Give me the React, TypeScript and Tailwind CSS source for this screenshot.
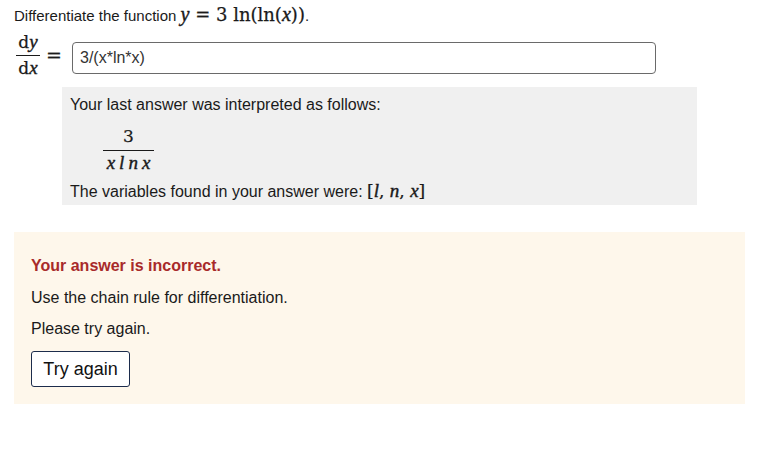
import React from 'react';

const sans = { fontFamily: '"Liberation Sans", Arial, sans-serif' };
const serif = { fontFamily: '"DejaVu Serif", "Liberation Serif", serif' };
const italic = { fontFamily: '"Liberation Serif", "Times New Roman", serif' };

// upright math (digits, operators, function names)
function M({ children, className = '' }: { children: React.ReactNode; className?: string }) {
  return (
    <span className={`[-webkit-text-stroke:0.25px_currentColor] ${className}`} style={serif}>
      {children}
    </span>
  );
}

// math italic variable
function V({ children, className = '' }: { children: React.ReactNode; className?: string }) {
  return (
    <span className={`italic text-[1.12em] [-webkit-text-stroke:0.4px_currentColor] ${className}`} style={italic}>
      {children}
    </span>
  );
}

export default function App() {
  return (
    <div className="w-[777px] h-[457px] bg-white text-[#1a1a1a]" style={sans}>
      {/* Question */}
      <div className="pl-[14px] h-[28px] text-[15px] leading-[28px]">
        Differentiate the function{' '}
        <M className="text-[18px]">
          <V>y</V> = 3 ln(ln(<V>x</V>))
        </M>
        .
      </div>

      {/* Answer input row */}
      <div className="flex items-start pl-[16px] h-[58px]">
        <M className="flex flex-col items-center w-[24px] text-[17px]">
          <span className="mt-[4px] leading-[20px]">
            d<V>y</V>
          </span>
          <span className="w-[24px] h-[1px] bg-[#1a1a1a] mt-[3px]" />
          <span className="mt-[2px] leading-[20px]">
            d<V>x</V>
          </span>
        </M>
        <M className="w-[32px] mt-[15px] text-[19px] leading-[24px] text-center pr-[4px]">=</M>
        <div className="mt-[14px] w-[584px] h-[32px] border border-[#6a6a6a] rounded-[4px] flex items-center pl-[7px] text-[16px] text-[#333]">
          3/(x*ln*x)
        </div>
      </div>

      {/* Validation */}
      <div className="ml-[62px] mt-[1px] w-[635px] h-[118px] bg-[#f0f0f0] px-[8px] pt-[6px] text-[16px]">
        <div className="leading-[24px]">Your last answer was interpreted as follows:</div>
        <M className="flex flex-col items-center w-[51px] ml-[33px] mt-[9px] text-[17px]">
          <span className="leading-[20px]">3</span>
          <span className="w-[51px] h-[1px] bg-[#1a1a1a] mt-[4px]" />
          <span className="mt-[2px] leading-[20px] flex gap-[4px]">
            <V>x</V>
            <V>l</V>
            <V>n</V>
            <V>x</V>
          </span>
        </M>
        <div className="leading-[24px] mt-[6px]">
          The variables found in your answer were:{' '}
          <M className="text-[17px]">
            [<V>l</V>, <V>n</V>, <V>x</V>]
          </M>
        </div>
      </div>

      {/* Feedback */}
      <div className="ml-[14px] mt-[27px] w-[731px] h-[172px] bg-[#fef7eb] pl-[17px] pt-[22px] text-[16px]">
        <div className="font-bold text-[#a82a2a] leading-[24px]">Your answer is incorrect.</div>
        <div className="mt-[8px] leading-[24px]">Use the chain rule for differentiation.</div>
        <div className="mt-[7px] leading-[24px]">Please try again.</div>
        <button className="mt-[10px] h-[36px] w-[99px] border border-[#1c2c4c] rounded-[3px] bg-white text-[18px] text-[#111] flex items-center justify-center">
          Try again
        </button>
      </div>
    </div>
  );
}
